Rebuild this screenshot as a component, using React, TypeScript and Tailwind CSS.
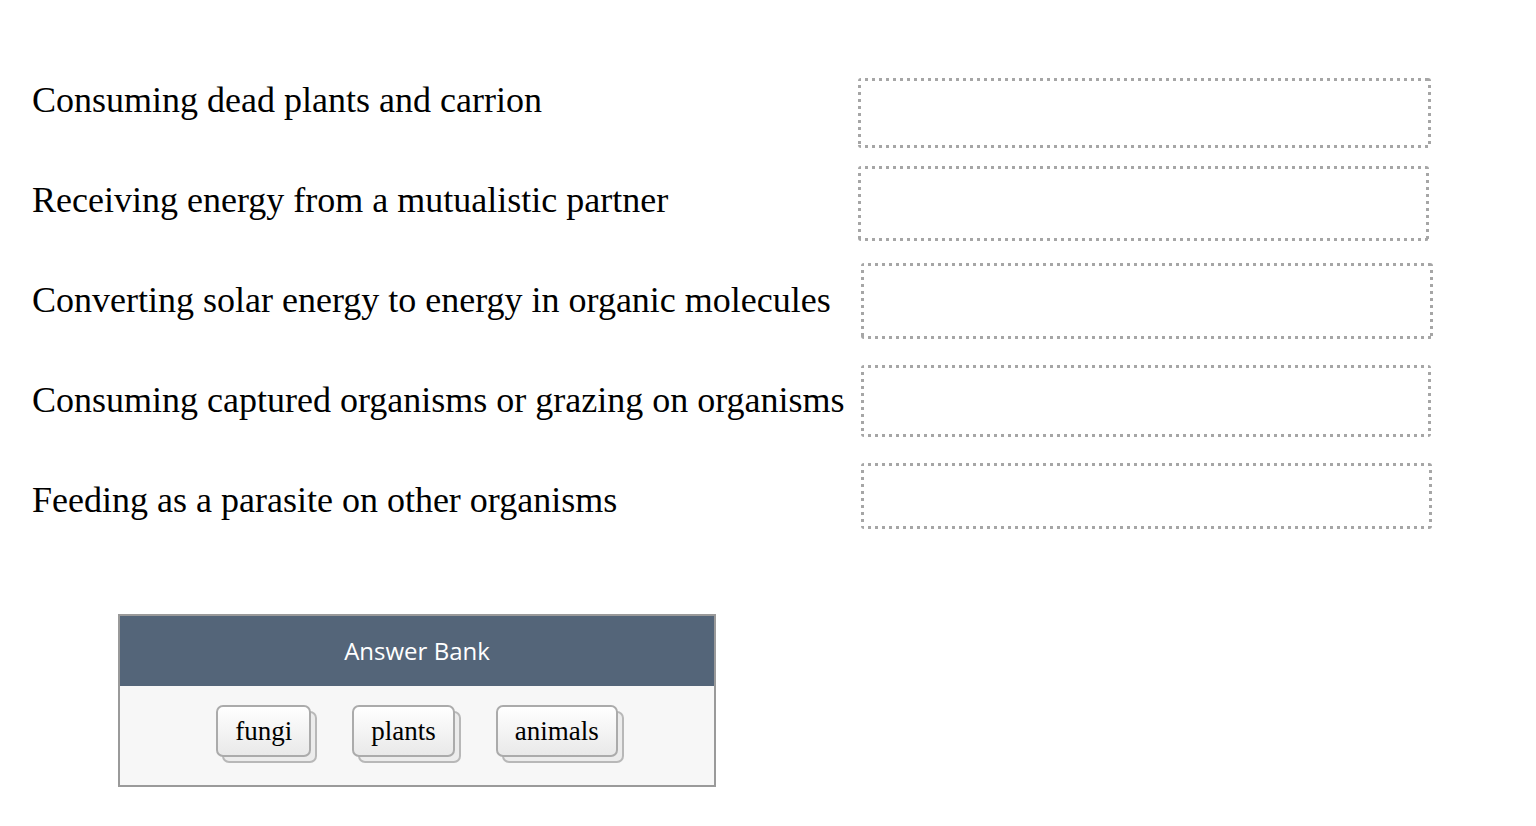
import React from "react";

const rows = [
  { label: "Consuming dead plants and carrion", box: "mt-[28px] h-[70px] ml-[858px] w-[573px]" },
  { label: "Receiving energy from a mutualistic partner", box: "mt-[16px] h-[75px] ml-[858px] w-[571px]" },
  { label: "Converting solar energy to energy in organic molecules", box: "mt-[13px] h-[76px] ml-[861px] w-[572px]" },
  { label: "Consuming captured organisms or grazing on organisms", box: "mt-[15px] h-[72px] ml-[861px] w-[570px]" },
  { label: "Feeding as a parasite on other organisms", box: "mt-[13px] h-[66px] ml-[861px] w-[571px]" },
];

const dotted =
  "bg-no-repeat rounded-[3px] [background-image:repeating-linear-gradient(90deg,#a6a6a6_0_3px,transparent_3px_7px),repeating-linear-gradient(90deg,#a6a6a6_0_3px,transparent_3px_7px),repeating-linear-gradient(180deg,#a6a6a6_0_3px,transparent_3px_7px),repeating-linear-gradient(180deg,#a6a6a6_0_3px,transparent_3px_7px)] [background-size:100%_3px,100%_3px,3px_100%,3px_100%] [background-position:left_top,left_bottom,left_top,right_top]";

function Chip({ text }: { text: string }) {
  return (
    <div className="relative">
      <div className="absolute left-[6px] top-[6px] right-[-6px] bottom-[-6px] rounded-[7px] border-2 border-[#b8b8b8] bg-[#ececec]" />
      <div className="relative h-[52px] px-[17px] flex items-center rounded-[7px] border-2 border-[#ababab] bg-gradient-to-b from-white to-[#e9e9e9] text-[27px] text-black" style={{ fontFamily: '"Liberation Serif", "Times New Roman", serif' }}>
        {text}
      </div>
    </div>
  );
}

export default function App() {
  return (
    <div className="w-[1536px] h-[826px] bg-white overflow-hidden" style={{ fontFamily: '"Liberation Serif", "Times New Roman", serif' }}>
      <div className="pt-[50px]">
        {rows.map((r, i) => (
          <div key={i} className="relative h-[100px] flex flex-col">
            <div className="absolute left-[32px] top-0 h-[100px] flex items-center text-[36px] text-black whitespace-nowrap leading-none">
              {r.label}
            </div>
            <div className={`${r.box} ${dotted}`} />
          </div>
        ))}
      </div>
      <div className="ml-[118px] mt-[64px] w-[598px] border-2 border-[#9a9a9a]">
        <div className="h-[70px] bg-[#546579] flex items-center justify-center text-white text-[24px] font-medium" style={{ fontFamily: '"Open Sans", "Noto Sans", sans-serif' }}>
          Answer Bank
        </div>
        <div className="h-[99px] bg-[#f7f7f7] flex items-start justify-center gap-[41px] pt-[19px]">
          <Chip text="fungi" />
          <Chip text="plants" />
          <Chip text="animals" />
        </div>
      </div>
    </div>
  );
}
